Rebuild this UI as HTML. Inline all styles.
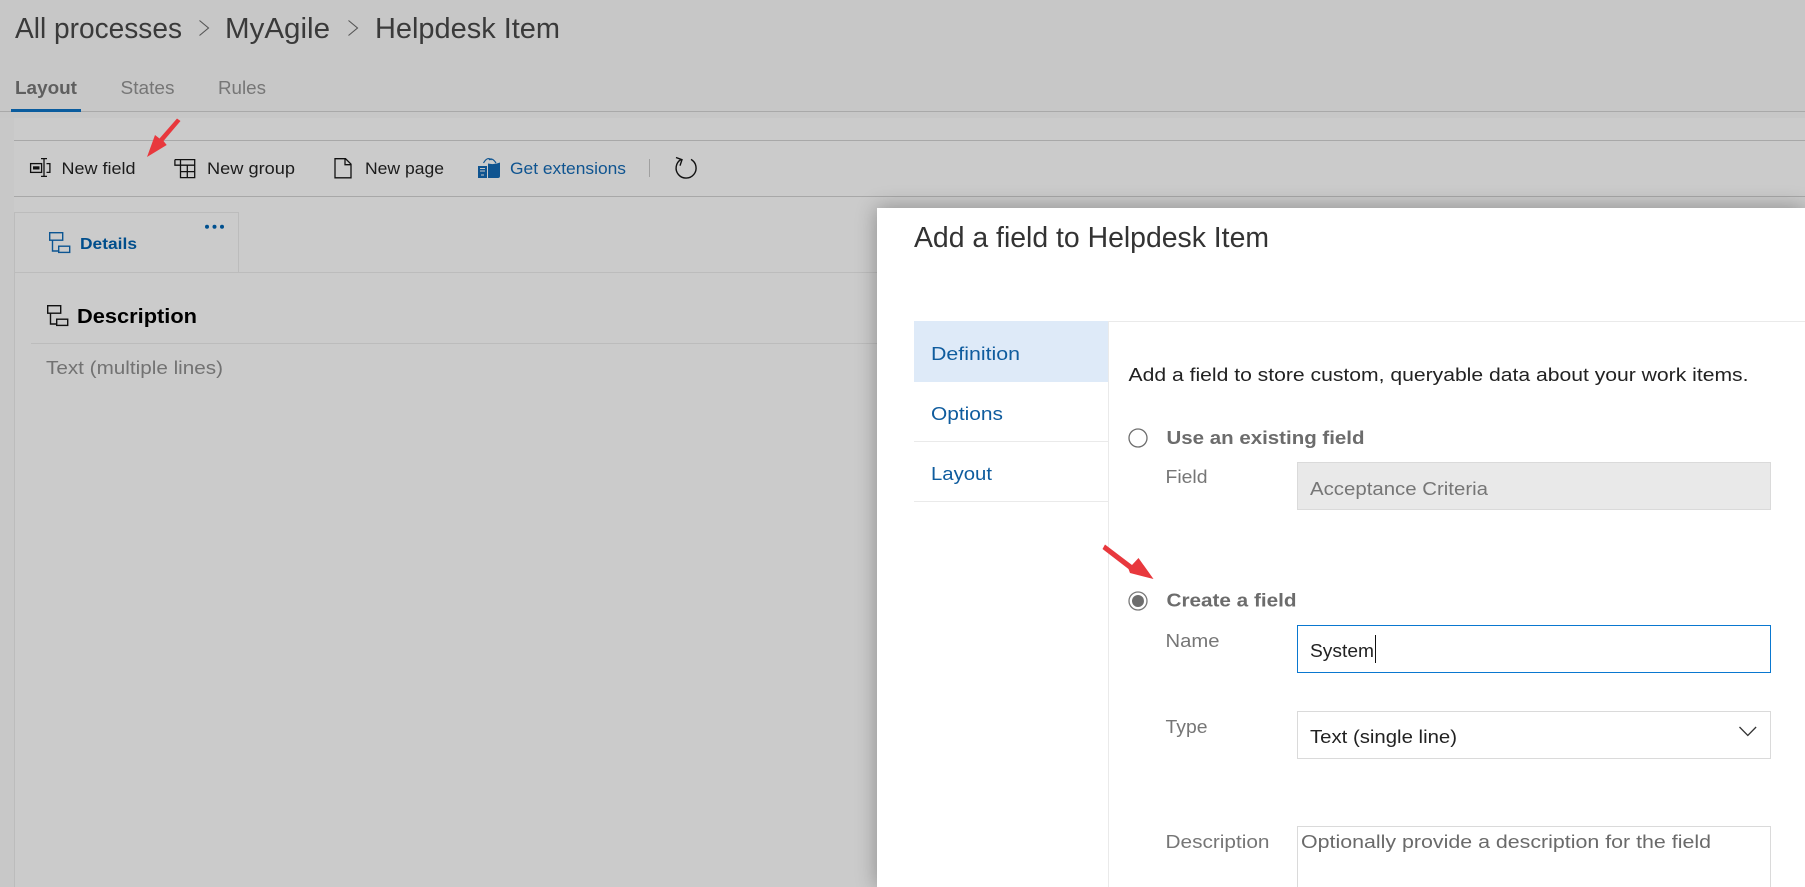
<!DOCTYPE html>
<html lang="en"><head><meta charset="utf-8"><title>Add a field to Helpdesk Item</title>
<style>
html,body{margin:0;padding:0;width:1805px;height:887px;overflow:hidden;background:#c7c7c7}
#root{position:relative;width:1805px;height:887px;overflow:hidden}
.b{position:absolute;box-sizing:border-box}
svg{position:absolute;left:0;top:0;display:block}
text{font-family:"Liberation Sans",sans-serif;white-space:pre}
</style></head><body><div id="root">
<div class="b" style="left:14px;top:118px;width:1791px;height:769px;background:#cbcbcb"></div>
<div class="b" style="left:0;top:118px;width:14px;height:769px;background:#c8c8c8"></div>
<div class="b" style="left:0;top:111px;width:1805px;height:1px;background:#a9a9a9"></div>
<div class="b" style="left:11px;top:109px;width:70px;height:3px;background:#0a5c9e"></div>
<div class="b" style="left:14px;top:140px;width:1791px;height:1px;background:#a8a8a8"></div>
<div class="b" style="left:14px;top:196px;width:1791px;height:1px;background:#a8a8a8"></div>
<div class="b" style="left:14px;top:212px;width:225px;height:61px;border:1px solid #bcbcbc"></div>
<div class="b" style="left:14px;top:272px;width:1791px;height:1px;background:#bcbcbc"></div>
<div class="b" style="left:14px;top:272px;width:1px;height:615px;background:#bcbcbc"></div>
<div class="b" style="left:31px;top:343px;width:846px;height:1px;background:#bcbcbc"></div>

<div class="b" style="left:877px;top:208px;width:928px;height:679px;background:#fff;box-shadow:0 0 20px rgba(0,0,0,.32)"></div>
<div class="b" style="left:914px;top:321px;width:891px;height:1px;background:#eaeaea"></div>
<div class="b" style="left:914px;top:321px;width:194px;height:61px;background:#deeaf8"></div>
<div class="b" style="left:914px;top:441px;width:194px;height:1px;background:#eaeaea"></div>
<div class="b" style="left:914px;top:501px;width:194px;height:1px;background:#eaeaea"></div>
<div class="b" style="left:1108px;top:321px;width:1px;height:566px;background:#eaeaea"></div>
<div class="b" style="left:1297px;top:462px;width:474px;height:48px;background:#e9e9e9;border:1px solid #dadada"></div>
<div class="b" style="left:1297px;top:625px;width:474px;height:48px;background:#fff;border:1px solid #0a78d0"></div>
<div class="b" style="left:1297px;top:711px;width:474px;height:48px;background:#fff;border:1px solid #dadada"></div>
<div class="b" style="left:1297px;top:826px;width:474px;height:61px;background:#fff;border:1px solid #dadada;border-bottom:0"></div>

<svg width="1805" height="887" viewBox="0 0 1805 887">
<!-- Breadcrumb -->
<g font-size="29" fill="#3a3a3a">
<text x="15" y="38" textLength="167" lengthAdjust="spacingAndGlyphs">All processes</text>
<text x="225" y="38" textLength="105" lengthAdjust="spacingAndGlyphs">MyAgile</text>
<text x="375" y="38" textLength="185" lengthAdjust="spacingAndGlyphs">Helpdesk Item</text>
</g>
<g fill="none" stroke="#555" stroke-width="1.1">
<path d="M199.5 20.5l9 7.5-9 7.5"/><path d="M348.500 20.500l9 7.500-9 7.500"/>
</g>
<!-- Tabs -->
<text x="15" y="94" font-size="18" font-weight="700" fill="#5f5f5f" textLength="62" lengthAdjust="spacingAndGlyphs">Layout</text>
<text x="120.5" y="94" font-size="18" fill="#767676" textLength="54" lengthAdjust="spacingAndGlyphs">States</text>
<text x="218" y="94" font-size="18" fill="#767676" textLength="48" lengthAdjust="spacingAndGlyphs">Rules</text>
<!-- Toolbar -->
<g font-size="17" fill="#1c1c1c">
<text x="61.5" y="174" textLength="74" lengthAdjust="spacingAndGlyphs">New field</text>
<text x="207" y="174" textLength="88" lengthAdjust="spacingAndGlyphs">New group</text>
<text x="365" y="174" textLength="79" lengthAdjust="spacingAndGlyphs">New page</text>
</g>
<text x="510" y="174" font-size="17" fill="#0f5490" textLength="116" lengthAdjust="spacingAndGlyphs">Get extensions</text>
<rect x="649" y="159" width="1" height="18" fill="#a0a0a0"/>
<!-- New field icon -->
<g fill="none" stroke="#111" stroke-width="1.3">
<rect x="30.6" y="163.6" width="11" height="8.8"/>
<path d="M41 158.6h6M44 158.6v17.8M41 176.4h6M46.5 163.6h3.4v8.8h-3.4"/>
</g>
<rect x="33" y="166.3" width="6.5" height="3.2" fill="#111"/>
<!-- New group icon -->
<g fill="none" stroke="#111" stroke-width="1.3">
<path d="M174.9 159.6h19.8v18h-14.2v-12.4M174.9 159.6v5.6h19.8M180.5 159.6v5.6M187.3 165.2v12.4M180.5 171.6h14.2"/>
</g>
<!-- New page icon -->
<path d="M335 158.7h10.5l5.5 5.5v13.6h-16zM345 158.7v6h6" fill="none" stroke="#111" stroke-width="1.3"/>
<!-- Get extensions icon -->
<path d="M483.5 163q4-7 8-3M489 160q3-3 7 3" fill="none" stroke="#0f5490" stroke-width="1.2"/>
<path d="M478 166h9v12h-9z" fill="#0f5490"/>
<path d="M488 163.5q6 1.5 12-1v13.5q0 2-2 2h-10z" fill="#0f5490"/>
<path d="M480 168.5h5M480 171h5M481 175h3" stroke="#c8c8c8" stroke-width="1"/>
<!-- Refresh icon -->
<path d="M681 159.5A10 10 0 1 0 691 159.4" fill="none" stroke="#111" stroke-width="1.4"/>
<path d="M676 157.5l6 2.2-2 6" fill="none" stroke="#111" stroke-width="1.4"/>
<!-- Page tab -->
<g fill="#00508f"><circle cx="207" cy="226.7" r="2"/><circle cx="214.5" cy="226.7" r="2"/><circle cx="222" cy="226.7" r="2"/></g>
<g fill="none" stroke="#0c5592" stroke-width="1.4">
<rect x="49.7" y="232.7" width="13" height="7.5"/><rect x="58.7" y="246.2" width="11" height="6.2"/>
<path d="M52.5 240.5v10.5h6"/>
</g>
<text x="80" y="249" font-size="16" font-weight="700" fill="#004e8c" textLength="57" lengthAdjust="spacingAndGlyphs">Details</text>
<g fill="none" stroke="#111" stroke-width="1.4">
<rect x="47.7" y="305.7" width="13" height="7.5"/><rect x="56.7" y="319.2" width="11" height="6.2"/>
<path d="M50.5 313.5v10.5h6"/>
</g>
<text x="77" y="323" font-size="20" font-weight="700" fill="#000" textLength="120" lengthAdjust="spacingAndGlyphs">Description</text>
<text x="46" y="374" font-size="18" fill="#727272" textLength="177" lengthAdjust="spacingAndGlyphs">Text (multiple lines)</text>
<!-- Dialog -->
<text x="914" y="247" font-size="29" fill="#333" textLength="355" lengthAdjust="spacingAndGlyphs">Add a field to Helpdesk Item</text>
<g font-size="18" fill="#0f5c9e">
<text x="931" y="360" textLength="89" lengthAdjust="spacingAndGlyphs">Definition</text>
<text x="931" y="420" textLength="72" lengthAdjust="spacingAndGlyphs">Options</text>
<text x="931" y="480" textLength="61" lengthAdjust="spacingAndGlyphs">Layout</text>
</g>
<text x="1128.5" y="381" font-size="18" fill="#222" textLength="620" lengthAdjust="spacingAndGlyphs">Add a field to store custom, queryable data about your work items.</text>
<circle cx="1138" cy="438" r="9" fill="#fff" stroke="#6e6e6e" stroke-width="1.3"/>
<text x="1166.5" y="444" font-size="18" font-weight="700" fill="#6c6c6c" textLength="198" lengthAdjust="spacingAndGlyphs">Use an existing field</text>
<g font-size="18" fill="#767676">
<text x="1165.5" y="483" textLength="42" lengthAdjust="spacingAndGlyphs">Field</text>
<text x="1310" y="495" textLength="178" lengthAdjust="spacingAndGlyphs">Acceptance Criteria</text>
<text x="1165.5" y="647" textLength="54" lengthAdjust="spacingAndGlyphs">Name</text>
<text x="1165.5" y="733" textLength="42" lengthAdjust="spacingAndGlyphs">Type</text>
<text x="1165.5" y="848" textLength="104" lengthAdjust="spacingAndGlyphs">Description</text>
<text x="1301" y="848" fill="#6a6a6a" textLength="410" lengthAdjust="spacingAndGlyphs">Optionally provide a description for the field</text>
</g>
<circle cx="1138" cy="601" r="9" fill="#fff" stroke="#7a7a7a" stroke-width="1.3"/>
<circle cx="1138" cy="601" r="6" fill="#6e6e6e"/>
<text x="1166.5" y="606.500" font-size="18" font-weight="700" fill="#6c6c6c" textLength="130" lengthAdjust="spacingAndGlyphs">Create a field</text>
<text x="1310" y="657" font-size="18" fill="#222" textLength="64" lengthAdjust="spacingAndGlyphs">System</text>
<rect x="1375" y="635" width="1" height="28" fill="#111"/>
<text x="1310" y="743" font-size="18" fill="#222" textLength="147" lengthAdjust="spacingAndGlyphs">Text (single line)</text>
<path d="M1739.5 727l8.3 8.5 8.3-8.5" fill="none" stroke="#333" stroke-width="1.3"/>
<!-- Red arrows -->
<path d="M177 118.5l3.5 2.5-17 20 3.2 4-19.7 12 8-22 4.5 3.5z" fill="#e8383d"/>
<path d="M1105 544.5l27 20.5 6.5-7 15 21-23.5-6-1.500-4-26-20z" fill="#e8383d"/>
</svg>
</div></body></html>
